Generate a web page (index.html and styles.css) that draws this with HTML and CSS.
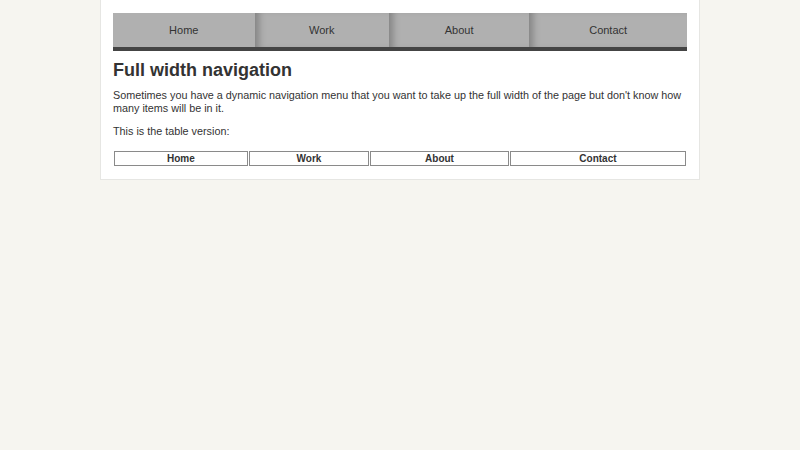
FILE: index.html
```html
<!DOCTYPE html>
<html lang="en">
<head>
<meta charset="utf-8">
<title>Full width navigation</title>
<link rel="stylesheet" href="styles.css">
</head>
<body>
<div class="page">
  <ul class="nav">
    <li><a href="#">Home</a></li>
    <li><a href="#">Work</a></li>
    <li><a href="#">About</a></li>
    <li><a href="#">Contact</a></li>
  </ul>
  <h1 class="title">Full width navigation</h1>
  <p class="intro">Sometimes you have a dynamic navigation menu that you want to take up the full width of the page but don't know how many items will be in it.</p>
  <p class="note">This is the table version:</p>
  <table class="tnav">
    <tr>
      <td>Home</td>
      <td>Work</td>
      <td>About</td>
      <td>Contact</td>
    </tr>
  </table>
</div>
</body>
</html>
```

FILE: styles.css
```css
html, body {
  margin: 0;
  padding: 0;
}
body {
  background: #f6f5f0;
  font-family: "Liberation Sans", Arial, sans-serif;
  font-size: 11px;
  color: #333;
}
.page {
  width: 574px;
  margin: 0 auto;
  padding: 12px;
  background: #fff;
  border: 1px solid #e6e6e3;
  border-top: none;
}
.nav {
  display: table;
  width: 100%;
  margin: 1px 0 0;
  padding: 0;
  list-style: none;
  background: #b0b0b0;
  border-bottom: 4px solid #444;
}
.nav li {
  display: table-cell;
  text-align: center;
  padding: 10px 23px;
  line-height: 14px;
  font-size: 11px;
}
.nav li + li {
  box-shadow: inset 8px 0 7px -4px rgba(0, 0, 0, 0.25);
}
.nav a {
  color: #333;
  text-decoration: none;
}
.title {
  font-size: 18px;
  font-weight: bold;
  margin: 9px 0 8px;
  line-height: 21px;
  color: #333;
}
.intro, .note {
  margin: 0 0 10px;
  font-size: 10.8px;
  line-height: 13px;
}
.note {
  margin-bottom: 12px;
}
.tnav {
  width: 100%;
  border-collapse: separate;
  border-spacing: 1px;
  margin: 0;
}
.tnav td {
  border: 1px solid #8a8a8a;
  padding: 0;
  text-align: center;
  font-weight: bold;
  font-size: 10px;
  line-height: 13px;
  color: #333;
}
```
